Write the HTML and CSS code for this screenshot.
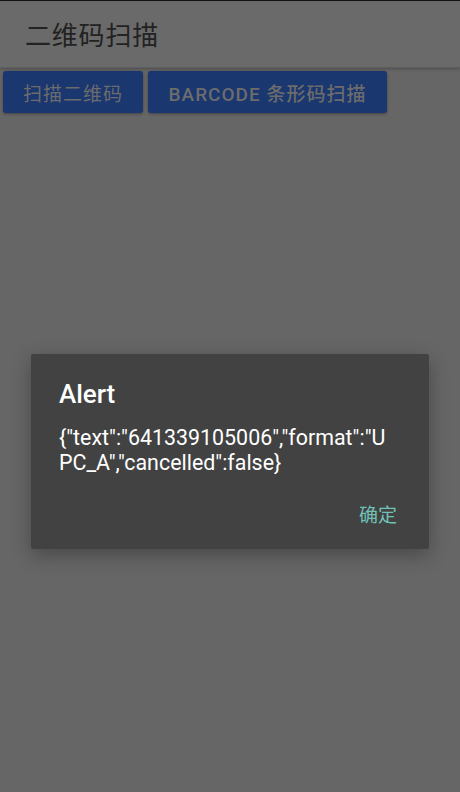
FILE: index.html
```html
<!DOCTYPE html>
<html lang="zh">
<head>
<meta charset="utf-8">
<link rel="stylesheet" href="styles.css">
</head>
<body>
<div class="page">
  <header class="toolbar"><span class="title">二维码扫描</span></header>
  <div class="actions">
    <button class="btn btn-qr">扫描二维码</button>
    <button class="btn btn-bar">BARCODE 条形码扫描</button>
  </div>
  <div class="stage">
    <div class="dialog">
      <div class="dialog-title">Alert</div>
      <div class="dialog-msg">{"text":"641339105006","format":"U<br>PC_A","cancelled":false}</div>
      <div class="dialog-actions"><span class="dialog-btn">确定</span></div>
    </div>
  </div>
</div>
</body>
</html>
```
FILE: styles.css
```css
html, body {
  margin: 0;
  padding: 0;
  height: 100%;
}
body {
  background: #666666;
  font-family: Roboto, "Noto Sans CJK SC", sans-serif;
  border-top: 1px solid #111;
  box-sizing: border-box;
}
.page {
  display: flex;
  flex-direction: column;
  height: 100%;
}
.toolbar {
  height: 66px;
  background: #6a6a6a;
  display: flex;
  align-items: center;
  padding-left: 25px;
  box-shadow: 0 1px 3px rgba(0,0,0,0.25);
  border-bottom: 1px solid #5e5e5e;
  position: relative;
  z-index: 1;
}
.title {
  font-size: 26px;
  color: #222;
  font-family: "Noto Sans CJK SC", sans-serif;
  letter-spacing: 0.8px;
  margin-top: -2px;
}
.actions {
  display: flex;
  gap: 5px;
  padding: 3px 3px 0 3px;
}
.btn {
  height: 42px;
  border: none;
  border-radius: 3px;
  background: #1a3770;
  color: #6c6c6c;
  font-family: Roboto, "Noto Sans CJK SC", sans-serif;
  font-size: 19px;
  font-weight: 500;
  letter-spacing: 1px;
  box-shadow: 0 1px 3px rgba(0,0,0,0.35);
  padding: 0;
}
.btn-qr { width: 140px; font-weight: 400; font-family: "Noto Sans CJK SC", sans-serif; }
.btn-bar { width: 239px; }
.stage {
  flex: 1;
  display: flex;
  justify-content: center;
  padding-top: 241px;
}
.dialog {
  width: 398px;
  height: 195px;
  box-sizing: border-box;
  background: #424242;
  border-radius: 2px;
  box-shadow: 0 6px 20px rgba(0,0,0,0.3);
  padding: 24px 28px 0 28px;
  display: flex;
  flex-direction: column;
}
.dialog-title {
  color: #fff;
  font-size: 26px;
  font-weight: 500;
  line-height: 32px;
}
.dialog-msg {
  color: #fff;
  font-size: 21.4px;
  line-height: 25px;
  margin-top: 15px;
  white-space: nowrap;
}
.dialog-actions {
  display: flex;
  justify-content: flex-end;
  margin-top: 25px;
  padding-right: 4px;
}
.dialog-btn {
  color: #70c2b8;
  font-size: 19px;
  font-family: "Noto Sans CJK SC", sans-serif;
}
```
